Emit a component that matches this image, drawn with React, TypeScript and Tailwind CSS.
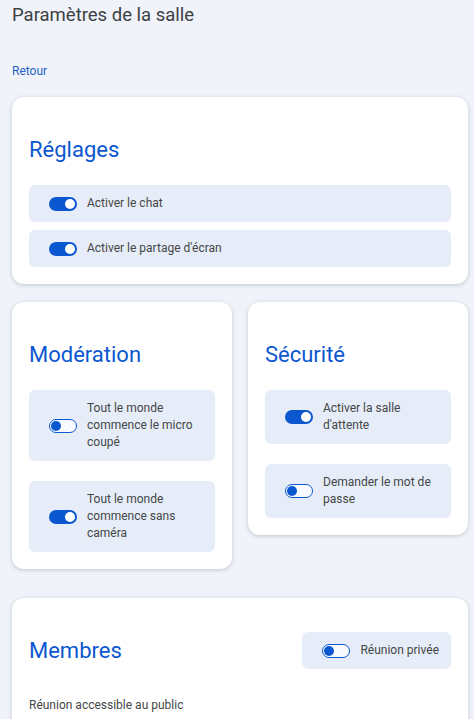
export default function App() {
  return (
    <main
      className="min-h-screen bg-[#f0f4fa] pl-[12px] pr-[6px] pb-8 text-[#444746]"
      style={{ fontFamily: 'Roboto, "Noto Sans", Arial, sans-serif' }}
    >
      <h1 className="pt-px text-[18.5px] leading-[28px] text-[#3c4043]">Paramètres de la salle</h1>
      <a href="#" className="mt-[34px] block text-[12px] leading-[17px] text-[#1f5fc4]">
        Retour
      </a>

      <section className="mt-[17px] rounded-xl bg-white p-[17px] shadow-[0_1px_4px_rgba(60,64,67,0.25)]">
        <h2 className="mt-[22px] mb-[21px] text-[22px] leading-[28px] text-[#0b57d0]">Réglages</h2>
        <div className="flex flex-col gap-2">
          <Row on label="Activer le chat" />
          <Row on label="Activer le partage d'écran" />
        </div>
      </section>

      <div className="mt-[18px] grid grid-cols-2 items-start gap-4">
        <section className="rounded-xl bg-white p-[17px] shadow-[0_1px_4px_rgba(60,64,67,0.25)]">
          <h2 className="mt-[22px] mb-[21px] text-[22px] leading-[28px] text-[#0b57d0]">Modération</h2>
          <div className="flex flex-col gap-5">
            <Row on={false} label="Tout le monde commence le micro coupé" />
            <Row on label="Tout le monde commence sans caméra" />
          </div>
        </section>
        <section className="rounded-xl bg-white p-[17px] shadow-[0_1px_4px_rgba(60,64,67,0.25)]">
          <h2 className="mt-[22px] mb-[21px] text-[22px] leading-[28px] text-[#0b57d0]">Sécurité</h2>
          <div className="flex flex-col gap-5">
            <Row on label="Activer la salle d'attente" />
            <Row on={false} label="Demander le mot de passe" />
          </div>
        </section>
      </div>

      <section className="mt-[29px] rounded-xl bg-white p-[17px] pb-10 shadow-[0_1px_4px_rgba(60,64,67,0.25)]">
        <div className="flex items-center justify-between">
          <h2 className="mt-[22px] mb-[21px] text-[22px] leading-[28px] text-[#0b57d0]">Membres</h2>
          <Row on={false} label="Réunion privée" />
        </div>
        <p className="mt-[11px] text-[12px] leading-[17px] text-[#444746]">Réunion accessible au public</p>
      </section>
    </main>
  );
}

function Row({ on, label }: { on: boolean; label: string }) {
  return (
    <div className="flex items-center gap-[10px] rounded-md bg-[#e6edf9] py-[10px] pl-[20px] pr-3">
      <Toggle on={on} />
      <span className="text-[12px] leading-[17px] text-[#444746]">{label}</span>
    </div>
  );
}

function Toggle({ on }: { on: boolean }) {
  if (on) {
    return (
      <span className="flex h-[14px] w-[28px] shrink-0 items-center justify-end rounded-full bg-[#0b57d0] pr-[2px]">
        <span className="h-[10px] w-[10px] rounded-full bg-white" />
      </span>
    );
  }
  return (
    <span className="flex h-[14px] w-[28px] shrink-0 items-center rounded-full border-[1.5px] border-[#0b57d0] bg-[#f8faff] pl-[1px]">
      <span className="h-[10px] w-[10px] rounded-full bg-[#0b57d0]" />
    </span>
  );
}
